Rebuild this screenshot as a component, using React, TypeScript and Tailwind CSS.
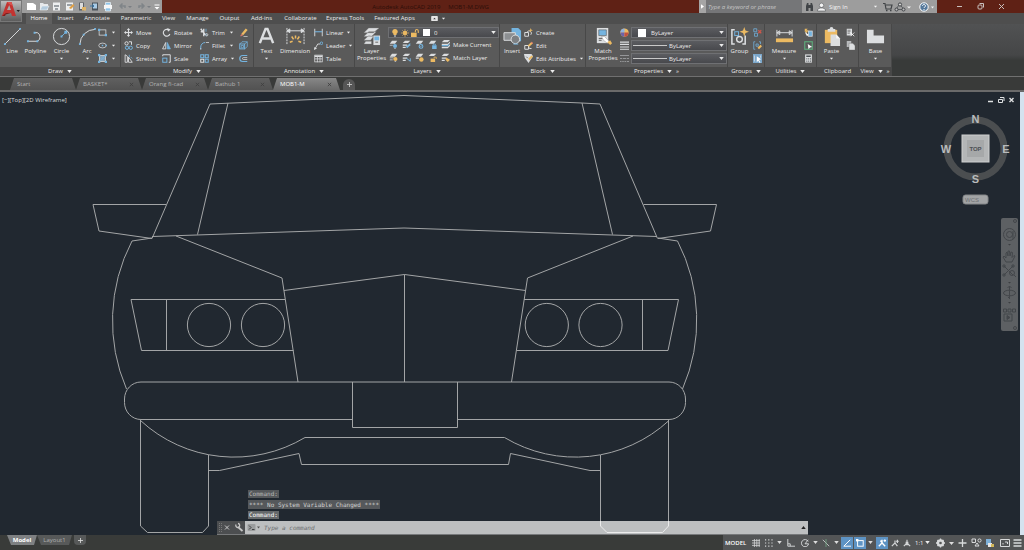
import type { ReactNode } from "react";

const W = "#dcdee0";
const B = "#74b4e0";
const Y = "#ecba62";

// small icons, all drawn on a 12x12 grid
const ICONS: Record<string, ReactNode> = {
  rect: <><rect x="1.5" y="2.5" width="9" height="7" stroke={W} /><path d="M0 1h3v3H0zM9 8h3v3H9z" fill={B} /></>,
  ellipse: <><ellipse cx="6" cy="6" rx="5" ry="3.2" stroke={W} /><path d="M5 5h2v2H5zM10 5h2v2h-2z" fill={B} /></>,
  hatch: <><rect x="2" y="2" width="8" height="8" fill="#8a9fb0" stroke={W} /><path d="M3 7l4-4M3 9l6-6M5 9l4-4" stroke={B} /><path d="M0 0h3v3H0zM9 0h3v3H9zM0 9h3v3H0zM9 9h3v3H9z" fill={B} /></>,
  move: <path d="M6 0l2.2 2.8H6.8v2.4h2.4V3.8L12 6 9.2 8.2V6.800H6.8v2.4h1.4L6 12 3.8 9.2h1.4V6.8H2.8v1.4L0 6l2.8-2.2v1.4h2.4V2.8H3.8z" fill={W} />,
  copy: <><circle cx="3.4" cy="3.2" r="2.2" stroke={W} strokeWidth="1.3" /><path d="M6.5 1H10v4" stroke={W} strokeWidth="1.3" /><circle cx="4" cy="9" r="2.2" stroke={B} strokeWidth="1.3" /><circle cx="9" cy="9" r="2.2" stroke={B} strokeWidth="1.3" /></>,
  stretch: <><path d="M1.5 1v10h3V3zM6 11h5L6 4z" stroke={W} strokeWidth="1.2" /><path d="M7 1v3M9 4l2 2" stroke={B} /></>,
  rotate: <><path d="M9.5 3.2A4.5 4.5 0 1 0 10.5 8" stroke={W} strokeWidth="1.5" /><path d="M7 0l4.5 2L8 5z" fill={W} /></>,
  mirror: <><path d="M5 2v8.5H.8z" stroke={W} strokeWidth="1.2" /><path d="M7 2v8.5h4.2z" fill={B} stroke={B} /></>,
  scale: <><path d="M1 3V1h10v10H9" stroke={W} strokeWidth="1.3" /><rect x="1" y="5.5" width="5.5" height="5.5" stroke={B} strokeWidth="1.3" /></>,
  trim: <><path d="M1 1l6 8M5 1v10M1 5h3" stroke={W} strokeWidth="1.8" /><path d="M8 1v4M8 7v4" stroke={B} /><circle cx="9" cy="9" r="1.5" stroke={W} /></>,
  fillet: <><path d="M1 11V8a6 6 0 0 1 6-6" stroke={B} strokeWidth="1.3" /><path d="M8 2h4M1 11.5v-2" stroke={W} /></>,
  array: <><path d="M1 1h4v4H1zM7 1h4v4H7zM7 7h4v4H7z" stroke={B} strokeWidth="1.4" /><path d="M1 7h4v4H1z" stroke={W} strokeWidth="1.4" /></>,
  erase: <><path d="M3 8l6-7.5 2.5 2L5.5 9.5z" fill={Y} /><path d="M3 8l2.500 1.600L3 11H1.500z" fill="#d8776b" /><path d="M6 11.5h5.5" stroke={W} /></>,
  explode: <><rect x="1" y="4" width="6.5" height="6.5" stroke={B} strokeWidth="1.3" /><path d="M1 4l3-3h7v6.5l-3.5 3M7.5 4L11 1M3 6h3v3H3z" stroke={B} /></>,
  offset: <><path d="M11 2H5a4 4 0 0 0 0 8h6" stroke={B} strokeWidth="1.5" /><path d="M11 4.800H6a1.300 1.300 0 0 0 0 2.600h5" stroke={W} /></>,
  linear: <><path d="M1 1v10M11 1v10" stroke={W} strokeWidth="1.2" /><path d="M1 5h10" stroke={B} strokeWidth="1.4" /></>,
  leader: <><path d="M1 11l4-7h3" stroke={W} strokeWidth="1.2" /><circle cx="10" cy="3" r="1.7" stroke={B} strokeWidth="1.2" /><path d="M0 12l.5-4L4 10z" fill={W} /></>,
  table: <><rect x="1" y="1.5" width="10" height="9" stroke={W} /><path d="M1 3h10" stroke={W} strokeWidth="2" /><path d="M1 6.5h10M4.5 3v8M8 3v8" stroke={W} /></>,
  bulb: <><path d="M6 0a4 4 0 0 0-2.300 7.300V9h4.600V7.300A4 4 0 0 0 6 0z" fill={Y} /><path d="M4.500 10.500h3" stroke={W} strokeWidth="1.500" /></>,
  sun: <><circle cx="6" cy="6" r="3.2" fill={Y} /><path d="M6 0v12M0 6h12M2 2l8 8M10 2l-8 8" stroke={Y} strokeWidth="1" /></>,
  unlock: <><rect x="0" y="5.5" width="8.5" height="6.5" fill={Y} /><path d="M6.5 5V3a2.200 2.200 0 0 1 4.400 0v3" stroke={Y} strokeWidth="1.600" /></>,
  layerOff: <><path d="M4 1h7L8 5H1z" fill={W} /><path d="M1 7h4" stroke={W} /><circle cx="8" cy="8" r="2.7" fill={B} /><path d="M7 11.5h2" stroke={W} /></>,
  layerIso: <><path d="M4 1h7L8 4H1zM1 6h6v1.500H1zM1 9h4v1.500H1z" fill={W} /><path d="M5 9l6-5v3L7 11z" fill={B} /></>,
  layerFreeze: <><path d="M4 1h7L8 5H1z" fill={W} /><circle cx="8" cy="8.5" r="2.5" stroke={B} strokeWidth="1.4" /><path d="M6 10l4-3" stroke={B} /></>,
  layerLock: <><path d="M4 1h7L8 5H1z" fill={W} /><rect x="5.500" y="7" width="6" height="5" fill={B} /><path d="M7 7V5.500h3V7" stroke={B} /></>,
  layerCur: <><path d="M4 0h8L9 3H1zM1 5h8l3-3v2L9 7H1zM1 9h8l3-3v2l-3 3H1z" fill={W} /><path d="M1 7.500h8l2-2" stroke={B} strokeWidth="1.400" /></>,
  layerOn: <><path d="M4 1h7L8 5H1zM1 6h5v1H1zM1 8.500h4v1H1z" fill={W} /><circle cx="8.500" cy="8" r="2.800" fill={Y} /><path d="M7.500 11.500h2" stroke={W} /></>,
  layerUniso: <><path d="M4 1h7L8 4H1zM1 6h6v1.500H1zM1 9h4v1.500H1z" fill={W} /><path d="M6 7l5 4M11 7v4" stroke={B} strokeWidth="1.300" /></>,
  layerThaw: <><path d="M4 1h7L8 5H1zM1 6h4v1.500H1z" fill={W} /><circle cx="8.500" cy="8.500" r="3" fill={Y} /></>,
  layerUnlock: <><path d="M4 1h7L8 4H1z" fill={W} /><rect x="3.500" y="7.500" width="6" height="4.500" fill={Y} /><path d="M8 7V5.500h3V8" stroke={Y} /></>,
  layerMatch: <><path d="M4 1h7L8 4H1zM1 6h6v1.500H1zM1 9h4v1.500H1z" fill={W} /><path d="M7 6l5 3-3 3L6 9z" fill={Y} /></>,
  create: <><path d="M1 11V6h5v5zM4 6a3 3 0 1 1 5 3" stroke={W} strokeWidth="1.3" /><path d="M9 0l.8 2.200L12 3l-2.200.8L9 6l-.8-2.200L6 3l2.200-.8z" fill={Y} /></>,
  edit: <><path d="M1 11V6h5v5zM6 8a3 3 0 0 0 4 2" stroke={W} strokeWidth="1.3" /><path d="M5 6l5-5 2 2-5 4.500z" fill={Y} /><path d="M9.500 1.500L12 3.500" stroke="#d8776b" strokeWidth="1.500" /></>,
  attrs: <><path d="M0 0h10l2 3-6 9-5-7z" fill={W} /><path d="M6 6l4-4 2 1.500-5 5z" fill={Y} /><path d="M3 3.500l2 2" stroke="#555" /></>,
  wheel: <><circle cx="6" cy="6" r="5.500" fill={Y} /><path d="M6 6V.5A5.500 5.500 0 0 0 .5 6z" fill="#8fb2e0" /><path d="M6 6H.5A5.500 5.500 0 0 0 6 11.500z" fill="#6c63a8" /><path d="M6 6v5.500A5.500 5.500 0 0 0 11.500 6z" fill="#c2503f" /></>,
  weights: <path d="M0 1.500h12M0 4.500h12M0 8h12M0 11h12" stroke={W} strokeWidth="1.600" />,
  ltypes: <path d="M0 2h12M0 6h3m1 0h4m1 0h3M0 10h2m1 0h2m1 0h2m1 0h3" stroke="#a9abad" />,
  ungroup: <><path d="M1 1h4v4H1zM2 7h4v4H2z" stroke={B} /><path d="M7 3l4 4m0-4L7 7" stroke="#d0574a" strokeWidth="1.600" /></>,
  groupEdit: <><path d="M3 1H1v10h2M8 1h2v3M4 4h3v3H4z" stroke={B} /><path d="M6 9l4-4 2 2-4 4z" fill={Y} /></>,
  groupSel: <><rect width="12" height="12" fill="#7ba7cb" /><path d="M2 2v8M10 2v3" stroke={W} /><path d="M5 3l6 4-3 1 2 3-1 1-2-3-2 2z" fill="#fff" /></>,
  quick: <><path d="M1 1h4L3 3h3L2 9l1-4H1z" fill={Y} /><rect x="6" y="4" width="5" height="7" fill={B} stroke={W} /><path d="M1 5l5 4-2 2z" fill="#fff" /></>,
  selectAll: <><rect x="1" y="1" width="10" height="10" stroke="#5eac7b" strokeWidth="1.500" /><path d="M5 4l6 4-3 .5L6 11z" fill="#fff" /></>,
  calc: <><rect x="1.500" y=".5" width="9" height="11" fill={W} /><path d="M3 3h6" stroke="#4c5054" strokeWidth="2" /><path d="M3 6.500h1.500m1 0H7m1 0h1.500M3 9.500h1.500m1 0H7m1 0h1.500" stroke="#4c5054" strokeWidth="1.300" /></>,
  cut: <><path d="M1 1h7v9H1z" fill={W} /><path d="M2 3h4M2 5h4M2 7h3" stroke="#666" /><path d="M6 6l5 5m0-5l-5 5" stroke="#fff" /></>,
  copyClip: <><path d="M1 0h6v8H1z" fill="#b8babc" /><path d="M4 3h5l3 3v6H4z" fill={W} stroke="#666" strokeWidth=".5" /></>,
};

function Icon({ name, className = "size-[9px]" }: { name: string; className?: string }) {
  return <svg viewBox="0 0 12 12" fill="none" aria-hidden="true" className={`${className} shrink-0`}>{ICONS[name]}</svg>;
}

function Caret({ className = "" }: { className?: string }) {
  return <svg viewBox="0 0 6 4" aria-hidden="true" className={`h-[3px] w-[5px] shrink-0 ${className}`}><path d="M0 0h6L3 4z" fill="currentColor" /></svg>;
}

function Big({ label, width, arrow, children }: { label: string; width: string; arrow?: boolean; children: ReactNode }) {
  return (
    <button type="button" className={`${width} flex shrink-0 flex-col items-center pt-[1px] text-center leading-[7px]`}>
      <svg viewBox="0 0 20 20" fill="none" aria-hidden="true" className="mb-[2px] size-[19px] shrink-0">{children}</svg>
      <span className="whitespace-pre">{label}</span>
      {arrow && <Caret className="mt-[2px] scale-75" />}
    </button>
  );
}

function Small({ icon, label, arrow }: { icon: string; label?: string; arrow?: boolean }) {
  return (
    <button type="button" aria-label={label ?? icon} className="flex h-[13px] items-center gap-[3px] whitespace-nowrap">
      <Icon name={icon} />
      {label && <span>{label}</span>}
      {arrow && <Caret className="ml-auto scale-75" />}
    </button>
  );
}

function Panel({ title, width, children, caret = true, corner }: { title: string; width: string; children: ReactNode; caret?: boolean; corner?: boolean }) {
  return (
    <section className={`${width} flex shrink-0 flex-col border-r border-[#484848] bg-[#5a5a5a]`}>
      <div className="flex h-[43px] pt-[2px]">{children}</div>
      <h2 className="flex h-[9px] items-center justify-center gap-1 bg-[#484848] pb-[1px] font-medium">
        {title}{caret && <Caret />}{corner && <span>»</span>}
      </h2>
    </section>
  );
}

function ByLayer({ label, swatch }: { label: string; swatch?: boolean }) {
  return (
    <div className="flex h-[11px] items-center border border-[#6f7073] bg-linear-to-b from-[#5b5c60] to-[#48494d] pr-[2px] pl-[1px]">
      {swatch ? <span className="mx-[5px] size-2 bg-white" /> : <span className="mr-[2px] w-[34px] border-t border-[#c9c9c9]" />}
      <select aria-label={label} className="min-w-0 flex-1 appearance-none bg-transparent"><option>ByLayer</option></select>
      <Caret />
    </div>
  );
}

const MENU = [
  { name: "Home", width: "w-[26px]" },
  { name: "Insert", width: "w-[27px]" },
  { name: "Annotate", width: "w-[36px]" },
  { name: "Parametric", width: "w-[42px]" },
  { name: "View", width: "w-[23px]" },
  { name: "Manage", width: "w-[35px]" },
  { name: "Output", width: "w-[29px]" },
  { name: "Add-ins", width: "w-[35px]" },
  { name: "Collaborate", width: "w-[43px]" },
  { name: "Express Tools", width: "w-[46px]" },
  { name: "Featured Apps", width: "w-[53px]" },
];

const DRAWINGS = [
  { name: "Start", width: "w-[66px]", closable: false },
  { name: "BASKET*", width: "w-[66px]", closable: true },
  { name: "Orang fi-cad", width: "w-[66px]", closable: true },
  { name: "Bathub 1", width: "w-[65px]", closable: true },
  { name: "MOB1-M", width: "w-[67px]", closable: true },
];

function QuickAccess() {
  return (
    <div className="flex h-[13px] w-[140px] shrink-0 items-center bg-[#9d9d9d]">
      <svg viewBox="0 0 140 13" fill="none" aria-label="Quick access" className="h-[13px] w-[140px]">
        <path d="M5 3h6l3 2v5H5z" fill="#fff" />
        <path d="M18 3h3l1 1h4v6h-8z" fill="#e6e8ea" /><path d="M18 10l2-4h7l-2 4z" fill="#b4cbdd" stroke="#f5f5f5" strokeWidth=".5" />
        <path d="M31 2.500h7v8h-7z" fill="#edeff0" /><path d="M32 5h5v2h-5zM33 8h3v2h-3z" fill="#9aa0a5" />
        <path d="M44 2.500h7v8h-7z" fill="#edeff0" /><path d="M45 4h5v2h-5z" fill="#9aa0a5" /><path d="M47 8l4-4 1.500 1.500L49 9z" fill="#df9f45" />
        <path d="M57 2.500h5v8h-5z" fill="#5c6167" /><path d="M58 3h3v6h-3z" fill="#dcdcdc" /><path d="M60 7h4v3.500h-4z" fill="#e0b467" />
        <path d="M70 2.500h6v8h-6z" fill="#4b535b" /><path d="M71 3.500h4v5h-4z" fill="#a9cbe5" /><path d="M68 6h4M70.500 4.500L72 6l-1.500 1.500" stroke="#3c78a8" />
        <path d="M82 5h8v4h-8z" fill="#f5f5f5" /><path d="M83.500 2.500h5V5h-5zM83.500 8h5v3h-5z" fill="#8fc4e8" stroke="#fff" strokeWidth=".6" />
        <path d="M103 8V6h-5m2.500-2.500L98 6l2.500 2.500" stroke="#7f8488" strokeWidth="1.500" />
        <path d="M117 8V6h5m-2.500-2.500L122 6l-2.500 2.500" stroke="#7f8488" strokeWidth="1.500" />
        <path d="M106 6h4l-2 2zM125 6h4l-2 2z" fill="#7b7f83" /><path d="M132.500 5h5" stroke="#fff" /><path d="M132.500 7h5l-2.500 2.500z" fill="#fff" />
      </svg>
    </div>
  );
}

function TitleBar() {
  return (
    <div className="flex h-[13px] items-center bg-[#5f2115]">
      <QuickAccess />
      <h1 className="flex-1 text-center font-medium whitespace-pre text-[#2b0f0a]">{"Autodesk AutoCAD 2019     MOB1-M.DWG"}</h1>
      <div className="flex h-[13px] w-[103px] shrink-0 items-center bg-[#757678]">
        <span className="flex h-full w-[7px] items-center justify-center bg-[#a5a5a5]">
          <svg viewBox="0 0 4 6" aria-hidden="true" className="h-[5px] w-[3px]"><path d="M0 0l4 3-4 3z" fill="#fff" /></svg>
        </span>
        <input aria-label="Search" placeholder="Type a keyword or phrase" className="ml-[2px] w-[90px] bg-transparent italic placeholder:text-[#c5c5c5]" />
      </div>
      <div className="flex h-[13px] w-[135px] shrink-0 items-center bg-[#9d9d9d] px-[3px]">
        <svg viewBox="0 0 24 10" fill="none" aria-hidden="true" className="h-[10px] w-[24px]">
          <path d="M1 9V4l1-3h1.500v8zM5.500 9V1H7l1 3v5zM3.500 3h2v3h-2z" fill="#414447" />
          <circle cx="16.500" cy="3.300" r="2.200" fill="#f3f3f3" stroke="#55585b" strokeWidth=".6" /><path d="M12.500 9V7.500L15 6h3l2.500 1.500V9z" fill="#f3f3f3" stroke="#55585b" strokeWidth=".6" />
        </svg>
        <button type="button" className="flex w-[49px] items-center justify-between text-[#f4f4f4]">Sign In <Caret className="scale-75" /></button>
        <svg viewBox="0 0 52 10" fill="none" aria-hidden="true" className="ml-[4px] h-[10px] w-[52px]">
          <path d="M1 1.500h2l1 5.500h5l1-4H4" stroke="#414447" strokeWidth="1.200" /><path d="M4 8.500h1.500M8 8.500h1.500" stroke="#414447" strokeWidth="1.500" />
          <path d="M17.500 2L14 7.500h8z" stroke="#5b5f63" /><circle cx="18" cy="2.500" r="1.600" fill="#d5d5d5" stroke="#414447" /><circle cx="14.500" cy="7.500" r="1.500" fill="#bbb" stroke="#414447" /><circle cx="21.500" cy="7.500" r="1.500" fill="#bbb" stroke="#414447" />
          <path d="M25 4.500h4l-2 2zM49 4.500h3l-1.500 2z" fill="#eee" />
          <circle cx="42" cy="5" r="4.200" fill="#55799b" stroke="#fff" /><path d="M40.500 4c0-2 3-2 3 0 0 1-1.500 1-1.500 2m0 1v1" stroke="#fff" />
        </svg>
      </div>
      <div className="flex w-[87px] shrink-0 items-center justify-around px-[12px] text-[#c9c0bd]">
        <button type="button" aria-label="Minimize"><svg viewBox="0 0 7 7" className="size-[7px]" fill="none" stroke="currentColor"><path d="M1 3.500h5" /></svg></button>
        <button type="button" aria-label="Restore"><svg viewBox="0 0 7 7" className="size-[7px]" fill="none" stroke="currentColor"><rect x="1" y="2" width="4" height="4" rx="1" /><path d="M2.500 .5h4v4" /></svg></button>
        <button type="button" aria-label="Close"><svg viewBox="0 0 7 7" className="size-[7px]" fill="none" stroke="currentColor"><path d="M1 1l5 5m0-5L1 6" /></svg></button>
      </div>
    </div>
  );
}

function Header() {
  return (
    <header className="flex bg-[#4e4e4e]">
      <button type="button" aria-label="Application menu" className="flex h-[22px] w-[22px] shrink-0 items-start border border-[#777] bg-linear-to-b from-[#bdbdbd] to-[#5c5c5c]">
        <svg viewBox="0 0 20 20" className="size-5">
          <path d="M1 15L6 1h4.500L15 15h-4l-1-3H5l-1 3z" fill="#c23431" /><path d="M6 1h4.500l1.300 4L8 3z" fill="#d9524d" />
          <path d="M6 9l2.200-5L10 9z" fill="#a9a9a9" /><path d="M1 15l4-3h5l-5.500 1.500L4 15z" fill="#7f1e1c" /><path d="M15.500 9h3.500l-1.700 2z" fill="#222" />
        </svg>
      </button>
      <div className="min-w-0 flex-1">
        <TitleBar />
        <nav className="flex h-[11px] items-end pl-1">
          {MENU.map((m, i) => (
            <button key={m.name} type="button" className={`${m.width} h-[11px] shrink-0 pb-[1px] text-center whitespace-nowrap ${i === 0 ? "bg-[#5f5f5f] text-white" : ""}`}>{m.name}</button>
          ))}
          <button type="button" aria-label="Ribbon display" className="ml-[10px] flex h-[11px] items-center gap-[3px]">
            <svg viewBox="0 0 8 6" className="h-[5px] w-[7px]"><rect width="8" height="6" rx="1" fill="#e5e5e5" /><path d="M2.500 4L4 2l1.500 2z" fill="#333" /></svg>
            <Caret className="scale-75" />
          </button>
        </nav>
      </div>
    </header>
  );
}

function Ribbon() {
  return (
    <div className="flex h-[53px] border-b border-[#707070] bg-linear-to-b from-[#515253] via-[#454647] via-60% to-[#383a39] to-70%">
      <Panel title="Draw" width="w-[121px]">
        <Big label="Line" width="w-[24px]"><path d="M2 18L18 2" stroke={W} /><path d="M1 17h2v2H1zM17 1h2v2h-2z" fill={B} /></Big>
        <Big label="Polyline" width="w-[23px]"><path d="M2 15h10a5 5 0 0 0 0-9H9" stroke={W} /><path d="M1 14h2v2H1zM11 14h2v2h-2zM8 5h2v2H8z" fill={B} /></Big>
        <Big label="Circle" width="w-[29px]" arrow><circle cx="10" cy="10" r="8.500" stroke={W} /><path d="M10 10l4-4" stroke={B} /><path d="M9 9h2v2H9zM13 4h3v3h-3z" fill={B} /></Big>
        <Big label="Arc" width="w-[22px]" arrow><path d="M2 18A16 16 0 0 1 18 2.500" stroke={W} /><path d="M1 17h2v2H1zM5 7h2v2H5zM17 1h2v2h-2z" fill={B} /></Big>
        <div className="flex w-[18px] flex-col"><Small icon="rect" arrow /><Small icon="ellipse" arrow /><Small icon="hatch" arrow /></div>
      </Panel>
      <Panel title="Modify" width="w-[133px]">
        <div className="ml-[3px] flex w-[38px] flex-col"><Small icon="move" label="Move" /><Small icon="copy" label="Copy" /><Small icon="stretch" label="Stretch" /></div>
        <div className="flex w-[38px] flex-col"><Small icon="rotate" label="Rotate" /><Small icon="mirror" label="Mirror" /><Small icon="scale" label="Scale" /></div>
        <div className="flex w-[34px] flex-col"><Small icon="trim" label="Trim" arrow /><Small icon="fillet" label="Fillet" arrow /><Small icon="array" label="Array" arrow /></div>
        <div className="ml-[5px] flex flex-col"><Small icon="erase" /><Small icon="explode" /><Small icon="offset" /></div>
      </Panel>
      <Panel title="Annotation" width="w-[101px]">
        <Big label="Text" width="w-[25px]" arrow><path d="M3 17L9 2h2l6 15M6 12h8" stroke={W} strokeWidth="2.600" /></Big>
        <Big label="Dimension" width="w-[32px]"><path d="M1 1v18M19 1v18" stroke={W} strokeDasharray="2 1" /><path d="M1 4h18M1 4l3-2v4zM19 4l-3-2v4z" stroke={W} fill={W} /><path d="M4 16l3-1M6 10l2 3M10 9v3M14 10l-2 3M16 16l-3-1" stroke={Y} strokeWidth="1.600" /></Big>
        <div className="ml-[3px] flex w-[37px] flex-col"><Small icon="linear" label="Linear" arrow /><Small icon="leader" label="Leader" arrow /><Small icon="table" label="Table" /></div>
      </Panel>
      <Panel title="Layers" width="w-[145px]">
        <Big label={"Layer\nProperties"} width="w-[33px]"><path d="M7 1h11l-6 5H2zM7 5l-5 5h8l5-5zM7 9l-5 5h7l3-4zM4 15h6v3H2z" fill={W} stroke="#777" strokeWidth=".4" /><rect x="12" y="9" width="7" height="10" fill={W} /><path d="M13 10h5v4h-5z" fill={B} /><path d="M14 16h3" stroke="#666" /></Big>
        <div className="flex min-w-0 flex-1 flex-col">
          <div className="mt-[1px] flex h-[11px] items-center gap-[2px] border border-[#6f7073] bg-linear-to-b from-[#5b5c60] to-[#48494d] px-[2px]">
            <Icon name="bulb" className="size-2" /><Icon name="sun" className="size-2" /><Icon name="unlock" className="size-2" /><span className="mx-[2px] size-[7px] bg-white" />
            <select aria-label="Layer" className="min-w-0 flex-1 appearance-none bg-transparent"><option>0</option></select>
            <Caret />
          </div>
          <div className="flex gap-1 pl-[1px]"><Small icon="layerOff" /><Small icon="layerIso" /><Small icon="layerFreeze" /><Small icon="layerLock" /><Small icon="layerCur" label="Make Current" /></div>
          <div className="flex gap-1 pl-[1px]"><Small icon="layerOn" /><Small icon="layerUniso" /><Small icon="layerThaw" /><Small icon="layerUnlock" /><Small icon="layerMatch" label="Match Layer" /></div>
        </div>
      </Panel>
      <Panel title="Block" width="w-[86px]">
        <Big label="Insert" width="w-[24px]"><path d="M9 1h7l3 3v11H9z" fill={B} /><path d="M1 6h12v8H1z" fill="#8c8f92" stroke={W} /><circle cx="13" cy="13" r="4.500" fill="#7d8083" stroke={W} /><path d="M11 18h5" stroke={B} /></Big>
        <div className="flex w-[59px] flex-col"><Small icon="create" label="Create" /><Small icon="edit" label="Edit" /><Small icon="attrs" label="Edit Attributes" arrow /></div>
      </Panel>
      <Panel title="Properties" width="w-[142px]" corner>
        <Big label={"Match\nProperties"} width="w-[34px]"><path d="M3 1h12v16H3z" fill={W} /><path d="M5 3h8v6H5z" fill={B} stroke="#555" strokeWidth=".6" /><path d="M5 12h4M5 14h3" stroke="#555" /><path d="M8 10h3l5 5-2 2-4-3z" fill="#fff" stroke="#777" strokeWidth=".4" /><path d="M14 16l3-2 2 3-2 2z" fill={Y} /></Big>
        <div className="flex w-[11px] flex-col"><Small icon="wheel" /><Small icon="weights" /><Small icon="ltypes" /></div>
        <div className="mt-[1px] flex min-w-0 flex-1 flex-col gap-[2px]"><ByLayer label="Object color" swatch /><ByLayer label="Lineweight" /><ByLayer label="Linetype" /></div>
      </Panel>
      <Panel title="Groups" width="w-[37px]">
        <Big label="Group" width="w-[23px]"><path d="M5 3H2v15h3M13 18h3V9" stroke={W} strokeWidth="1.600" /><rect x="5" y="5" width="4" height="4" stroke={B} /><circle cx="10" cy="13" r="3" stroke={W} strokeWidth="1.500" /><path d="M15 0l1.300 3.700L20 5l-3.700 1.300L15 10l-1.300-3.700L10 5l3.700-1.300z" fill={Y} /></Big>
        <div className="ml-[2px] flex flex-col"><Small icon="ungroup" /><Small icon="groupEdit" /><Small icon="groupSel" /></div>
      </Panel>
      <Panel title="Utilities" width="w-[52px]">
        <Big label="Measure" width="w-[38px]" arrow><path d="M2 3v7M18 3v7M2 6h16M2 6l3-2v4zM18 6l-3-2v4z" stroke={W} /><path d="M1 12h18v4H1z" fill={Y} /></Big>
        <div className="ml-[1px] flex flex-col"><Small icon="quick" /><Small icon="selectAll" /><Small icon="calc" /></div>
      </Panel>
      <Panel title="Clipboard" width="w-[42px]" caret={false}>
        <Big label="Paste" width="w-[29px]" arrow><path d="M3 3h13v14H3z" fill={Y} /><path d="M6 2h2a2 2 0 0 1 4 0h2v3H6z" fill={W} /><path d="M9 8h6l4 4v8H9z" fill="#dcdedf" /><path d="M15 8v4h4" fill="#f8f8f8" /></Big>
        <div className="flex flex-col"><Small icon="cut" /><Small icon="copyClip" /></div>
      </Panel>
      <Panel title="View" width="w-[33px]" corner>
        <Big label="Base" width="w-[33px]" arrow><path d="M1 3h7v6h11v8H1z" fill={W} /></Big>
      </Panel>
    </div>
  );
}

function DrawingTabs() {
  return (
    <div className="flex h-[15px] items-end border-b-2 border-[#6a6a6a] bg-[#393a39] pl-[10px]">
      {DRAWINGS.map((d, i) => {
        const active = i === DRAWINGS.length - 1;
        return (
          <div key={d.name} className={`${d.width} flex h-3 items-center pr-2 pl-[7px] [clip-path:polygon(0_100%,4px_0,calc(100%-4px)_0,100%_100%)] ${active ? "bg-linear-to-b from-[#888] to-[#6a6a6a] text-white" : "bg-linear-to-b from-[#606060] to-[#525252] text-[#b3b3b3]"}`}>
            <button type="button" className="flex-1 text-left whitespace-nowrap">{d.name}</button>
            {d.closable && <button type="button" aria-label={`Close ${d.name}`}><svg viewBox="0 0 6 6" className="size-[5px]" stroke="#404040"><path d="M1 1l4 4m0-4L1 5" /></svg></button>}
          </div>
        );
      })}
      <button type="button" aria-label="New drawing" className="ml-[3px] flex h-[11px] w-3 items-center justify-center rounded-t-full rounded-b bg-[#565656]">
        <svg viewBox="0 0 6 6" className="size-[5px]" stroke="#ccc"><path d="M3 0v6M0 3h6" /></svg>
      </button>
    </div>
  );
}

// front view of the car, in model space units
function CarDrawing() {
  return (
    <svg viewBox="0 92 1020 443" preserveAspectRatio="xMinYMin meet" fill="none" stroke="#a3a5a6" aria-label="MOB1-M drawing" className="pointer-events-none absolute inset-0 size-full">
      <path d="M152 238.500L210 104L404 95.500L582 103L600 104L657.500 238.500M228 103L197.500 234.500M582 103L612.500 234.500" />
      <path d="M166 204.500H93L99 231L152 238.500M643.500 204.500H716.500L710.500 231L658 238.500" />
      <path d="M152 236.500L404 228L657 236.500M152 238L132 241M658 238L677.500 241" />
      <path d="M132 241A173 173 0 0 0 126.500 389M677.500 241A173 173 0 0 1 682.500 389" />
      <path d="M176 236L282 278L298 382M633 236L527.500 278L511.500 382M284 290.500L404.500 274.500L525.500 290.500M404.500 274.500V382" />
      <path d="M285 299.500H131L141.500 350.500H293.500M166.500 299.500V350.500M524 299.500H678.500L668 350.500H516.500M642.500 299.500V350.500" />
      <circle cx="209" cy="325" r="21.600" /><circle cx="263" cy="325" r="21.600" /><circle cx="546.800" cy="325" r="21.600" /><circle cx="600.500" cy="325" r="21.600" />
      <path d="M352 419.500H141A16.500 17 0 0 1 124.500 402.500V399A16.500 17 0 0 1 141 382H669A16.500 17 0 0 1 685.500 399V402.500A16.500 17 0 0 1 669 419.500H457.500M352.500 382V427.500H457.500V382" />
      <path d="M140.500 420.500A138 138 0 0 0 305 437.500H504.500A138 138 0 0 0 669 420.500" />
      <path d="M208.500 470.500H219.500L299 453.500L301.500 464.500H508.500L510.500 453.500L590 470.500H601" />
      <path d="M140.500 420V526L147.500 532.500H202.500L208.500 526V455M600.500 455V521M668.500 420V521" />
      <path d="M600.500 521V526L607 532.500H662.500L668.500 526V521" stroke="#ececec" />
    </svg>
  );
}

function ViewCube() {
  return (
    <svg viewBox="0 0 74 96" aria-label="View cube" className="absolute top-[20px] right-[7px] h-[96px] w-[74px]">
      <circle cx="36.500" cy="36.500" r="28.500" fill="none" stroke="#4b4e50" strokeWidth="7" />
      <rect x="23" y="23" width="27" height="27" fill="#b4b6b7" stroke="#cfd0d0" />
      <rect x="28" y="28" width="17" height="17" fill="#a6a8a9" />
      <g fontFamily="Liberation Sans, sans-serif" textAnchor="middle" fontWeight="bold" fill="#b9bbbc" fontSize="11">
        <text x="36.500" y="11">N</text><text x="67" y="41">E</text><text x="36.500" y="71">S</text><text x="7" y="41">W</text>
        <text x="36.500" y="39" fontSize="6" fill="#4d5054">TOP</text>
      </g>
      <rect x="24" y="83" width="25" height="9" rx="2.500" fill="#a2a4a5" stroke="#858789" />
      <text x="26" y="90" fontFamily="Liberation Sans, sans-serif" fontSize="6" fill="#6f7274">WCS</text>
    </svg>
  );
}

function NavBar() {
  return (
    <div className="absolute top-[126px] right-[2px] flex w-[17px] justify-center rounded-[2px] bg-[#5d6063]">
      <svg viewBox="0 0 17 113" fill="none" stroke="#43464a" aria-label="Navigation bar" className="h-[113px] w-[17px]">
        <circle cx="14" cy="3" r="1.500" /><circle cx="14" cy="110" r="1.500" />
        <circle cx="8.500" cy="16.500" r="6" /><circle cx="8.500" cy="16.500" r="3" /><path d="M12 13v8" />
        <path d="M5 44l-3-5 1-1 2 2v-5l1-1 1 4v-5h1.500l.5 5 1-4 1.500.5-.5 5 2-2 1 .5-3 6z" />
        <path d="M3 48l9 9M12 48l-9 9M2 47h2v2H2zM11 47h2v2h-2zM2 56h2v2H2z" /><circle cx="11" cy="55" r="2.500" /><path d="M13 57l2 2" />
        <ellipse cx="8.500" cy="75" rx="6" ry="2.800" /><path d="M8.500 68v12M6.500 70l2-2 2 2M7 79l2 2" />
        <path d="M2.500 91h3v3h-3zM7 91h3v3H7zM11.500 91h3v3h-3zM3 96h8v7H3z" /><path d="M6 97.500l3 2-3 2z" fill="#43464a" />
        <path d="M7 26h3l-1.500 1.500zM7 64h3l-1.500 1.500zM7 84h3l-1.500 1.500z" fill="#3a3d40" stroke="none" />
      </svg>
    </div>
  );
}

function CommandLine() {
  return (
    <div className="absolute bottom-0 left-[217px] w-[591px] font-['DejaVu_Sans_Mono',monospace] text-[6px]">
      <div className="flex flex-col items-start gap-[2px] pb-[2px] pl-[31px] text-[#d0d0d0]">
        <span className="bg-[#55585b] px-[1px] leading-[8px] text-[#b9b9b9]">Command:</span>
        <span className="bg-[#55585b] px-[1px] leading-[9px] whitespace-nowrap">**** No System Variable Changed ****</span>
        <span className="bg-[#66696b] px-[1px] leading-[8px] text-white">Command:</span>
      </div>
      <div className="flex h-[14px] border-b border-[#77797b] bg-[#bdbfc0]">
        <div className="flex w-[28px] items-center bg-[#4c4e50]">
          <svg viewBox="0 0 28 13" fill="none" stroke="#c7c7c7" aria-hidden="true" className="h-[13px] w-[28px]">
            <path d="M2.500 2v9M4.500 2v9" stroke="#777" strokeDasharray="1 1" /><path d="M8 4.500l4 4m0-4l-4 4" /><path d="M21 6l4.500 4" strokeWidth="1.800" /><path d="M19 3.500a2 2 0 0 0 3 2.500a2 2 0 0 0-1-3.500" strokeWidth="1.300" />
          </svg>
        </div>
        <svg viewBox="0 0 16 13" fill="none" aria-hidden="true" className="h-[13px] w-[16px]"><rect x="2.500" y="3" width="8" height="7" rx="1" fill="#9b9d9e" /><path d="M4 4.500l2 2-2 2M7 8.500h2.500" stroke="#3f4143" /><path d="M12 5.500h3l-1.500 2z" fill="#555" /></svg>
        <input aria-label="Command" placeholder="Type a command" className="min-w-0 flex-1 bg-transparent pl-[3px] italic placeholder:text-[#6b6d6f]" />
        <Caret className="mt-[5px] mr-[2px] rotate-180 text-[#222]" />
      </div>
    </div>
  );
}

// drafting toggles, left to right
const STATUS: { name: string; width: string; on?: boolean; arrow?: boolean; art: ReactNode }[] = [
  { name: "Grid", width: "w-[13px]", art: <path d="M3 0v10M6 0v10M0 2h10M0 5h10M0 8h10M9 0v10" /> },
  { name: "Snap", width: "w-[22px]", arrow: true, art: <path d="M0 1h10M0 5h10M0 9h10" strokeDasharray="1.500 2.500" strokeWidth="1.500" /> },
  { name: "Ortho", width: "w-[14px]", art: <path d="M1 0v9h9M1 6h3v3" strokeWidth="1.200" /> },
  { name: "Polar", width: "w-[21px]", arrow: true, art: <path d="M9 3a4.500 4.500 0 1 0 .5 3H5l4-5" strokeWidth="1.200" /> },
  { name: "Isometric", width: "w-[21px]", arrow: true, art: <><path d="M1 1l8 8" /><path d="M5 0v10" stroke="#72a583" /></> },
  { name: "Tracking", width: "w-[13px]", on: true, art: <path d="M9 1L1 9h9" strokeWidth="1.200" /> },
  { name: "Object snap", width: "w-[22px]", on: true, arrow: true, art: <><rect x="2" y="2" width="7" height="7" strokeWidth="1.200" /><path d="M0 0h3v3H0z" fill="#fff" stroke="none" /></> },
  { name: "Annotation visibility", width: "w-[13px]", on: true, art: <path d="M5 1v4L1 9m4-4l4 4M3 2l4 5M7 2h3M8.500 .5v3" strokeWidth="1.700" /> },
  { name: "Auto scale", width: "w-[12px]", art: <path d="M5 2v3L1 9m4-4l3 4M8 1v4M6.500 3h3" strokeWidth="1.500" /> },
  { name: "Annotation scale", width: "w-[12px]", art: <path d="M5 1v4L1 9m4-4l4 4M4 4h2v3H4z" strokeWidth="1.400" /> },
];

function StatusBar() {
  return (
    <footer className="flex h-[15px] items-start bg-[#393b39]">
      <div className="flex pl-[7px] text-[#aeb0b0]">
        <button type="button" className="h-[10px] w-[30px] bg-[#7e8082] font-bold text-white [clip-path:polygon(0_0,100%_0,calc(100%-3px)_100%,4px_100%)]">Model</button>
        <button type="button" className="h-[10px] w-[35px] bg-[#575959] [clip-path:polygon(0_0,100%_0,calc(100%-3px)_100%,4px_100%)]">Layout1</button>
        <button type="button" aria-label="New layout" className="ml-[2px] flex h-[10px] w-3 items-center justify-center rounded-b bg-[#575959]"><svg viewBox="0 0 6 6" className="size-[5px]" stroke="#ddd"><path d="M3 0v6M0 3h6" /></svg></button>
      </div>
      <div className="ml-auto flex h-[15px] items-center bg-[#535556] pl-[2px]">
        <button type="button" className="w-[25px] text-left font-semibold text-white">MODEL</button>
        {STATUS.map(s => (
          <button key={s.name} type="button" aria-label={s.name} className={`${s.width} flex shrink-0 items-center`}>
            <span className={`flex h-[12px] w-[12px] items-center justify-center ${s.on ? "bg-[#5d93c4]" : ""}`}>
              <svg viewBox="0 0 10 10" fill="none" stroke={s.on ? "#fff" : "#d4d6d7"} className="size-[8px]">{s.art}</svg>
            </span>
            {s.arrow && <Caret className="ml-[2px] text-[#ddd]" />}
          </button>
        ))}
        <button type="button" className="flex w-[20px] items-center gap-[1px] pl-[2px]">1:1 <Caret className="ml-[1px]" /></button>
        <svg viewBox="0 0 91 14" fill="none" stroke="#d8dadb" aria-label="Workspace tools" className="h-[14px] w-[91px]">
          <circle cx="7.500" cy="7" r="2.700" strokeWidth="2" /><path d="M7.500 2.500v9M3 7h9M4.500 4l6 6M10.500 4l-6 6" strokeWidth="1.300" /><circle cx="7.500" cy="7" r="1.300" fill="#535556" stroke="none" />
          <path d="M16 6h5l-2.500 3z" fill="#ddd" stroke="none" /><path d="M29.500 3v8M25.500 7h8" strokeWidth="1.300" />
          <path d="M39 3h3.500v3.500H39zM42 10l2-3 2 3z" /><circle cx="46.500" cy="4.500" r="1.600" />
          <path d="M53 3h5v6h-5z" fill="#7eb0d8" stroke="none" /><path d="M55 7h4v4h-4z" fill="#e8e8e8" stroke="none" /><path d="M58 8h3v3h-3z" fill="#d3b85a" stroke="none" />
          <path d="M67.500 3.500h9v7h-9zM70 8.500V7M72 6h2.500v2" />
          <path d="M80.500 4h8M80.500 7h8M80.500 10h8" strokeWidth="1.300" />
        </svg>
      </div>
    </footer>
  );
}

export default function App() {
  return (
    <div className="flex min-h-screen flex-col overflow-hidden bg-[#393b39] font-['Open_Sans',sans-serif] text-[6px] leading-[8px] text-[#ececec]">
      <Header />
      <Ribbon />
      <DrawingTabs />
      <main className="relative mr-1 flex-1 bg-[#212830] shadow-[4px_0_0_#d5e2ef]">
        <div className="flex items-center justify-between px-[2px] pt-1 text-[#d8dadb]">
          <span>[−][Top][2D Wireframe]</span>
          <svg viewBox="0 0 28 8" fill="none" stroke="#dfe1e2" aria-label="Viewport controls" className="mr-[3px] h-[8px] w-[28px]">
            <path d="M1 5.500h5" strokeWidth="1.500" /><path d="M11.500 3.500h4v3h-4zM13 1.500h4V5" /><path d="M22.500 2l4 4m0-4l-4 4" strokeWidth="1.400" />
          </svg>
        </div>
        <CommandLine />
        <CarDrawing />
        <ViewCube />
        <NavBar />
      </main>
      <StatusBar />
    </div>
  );
}
